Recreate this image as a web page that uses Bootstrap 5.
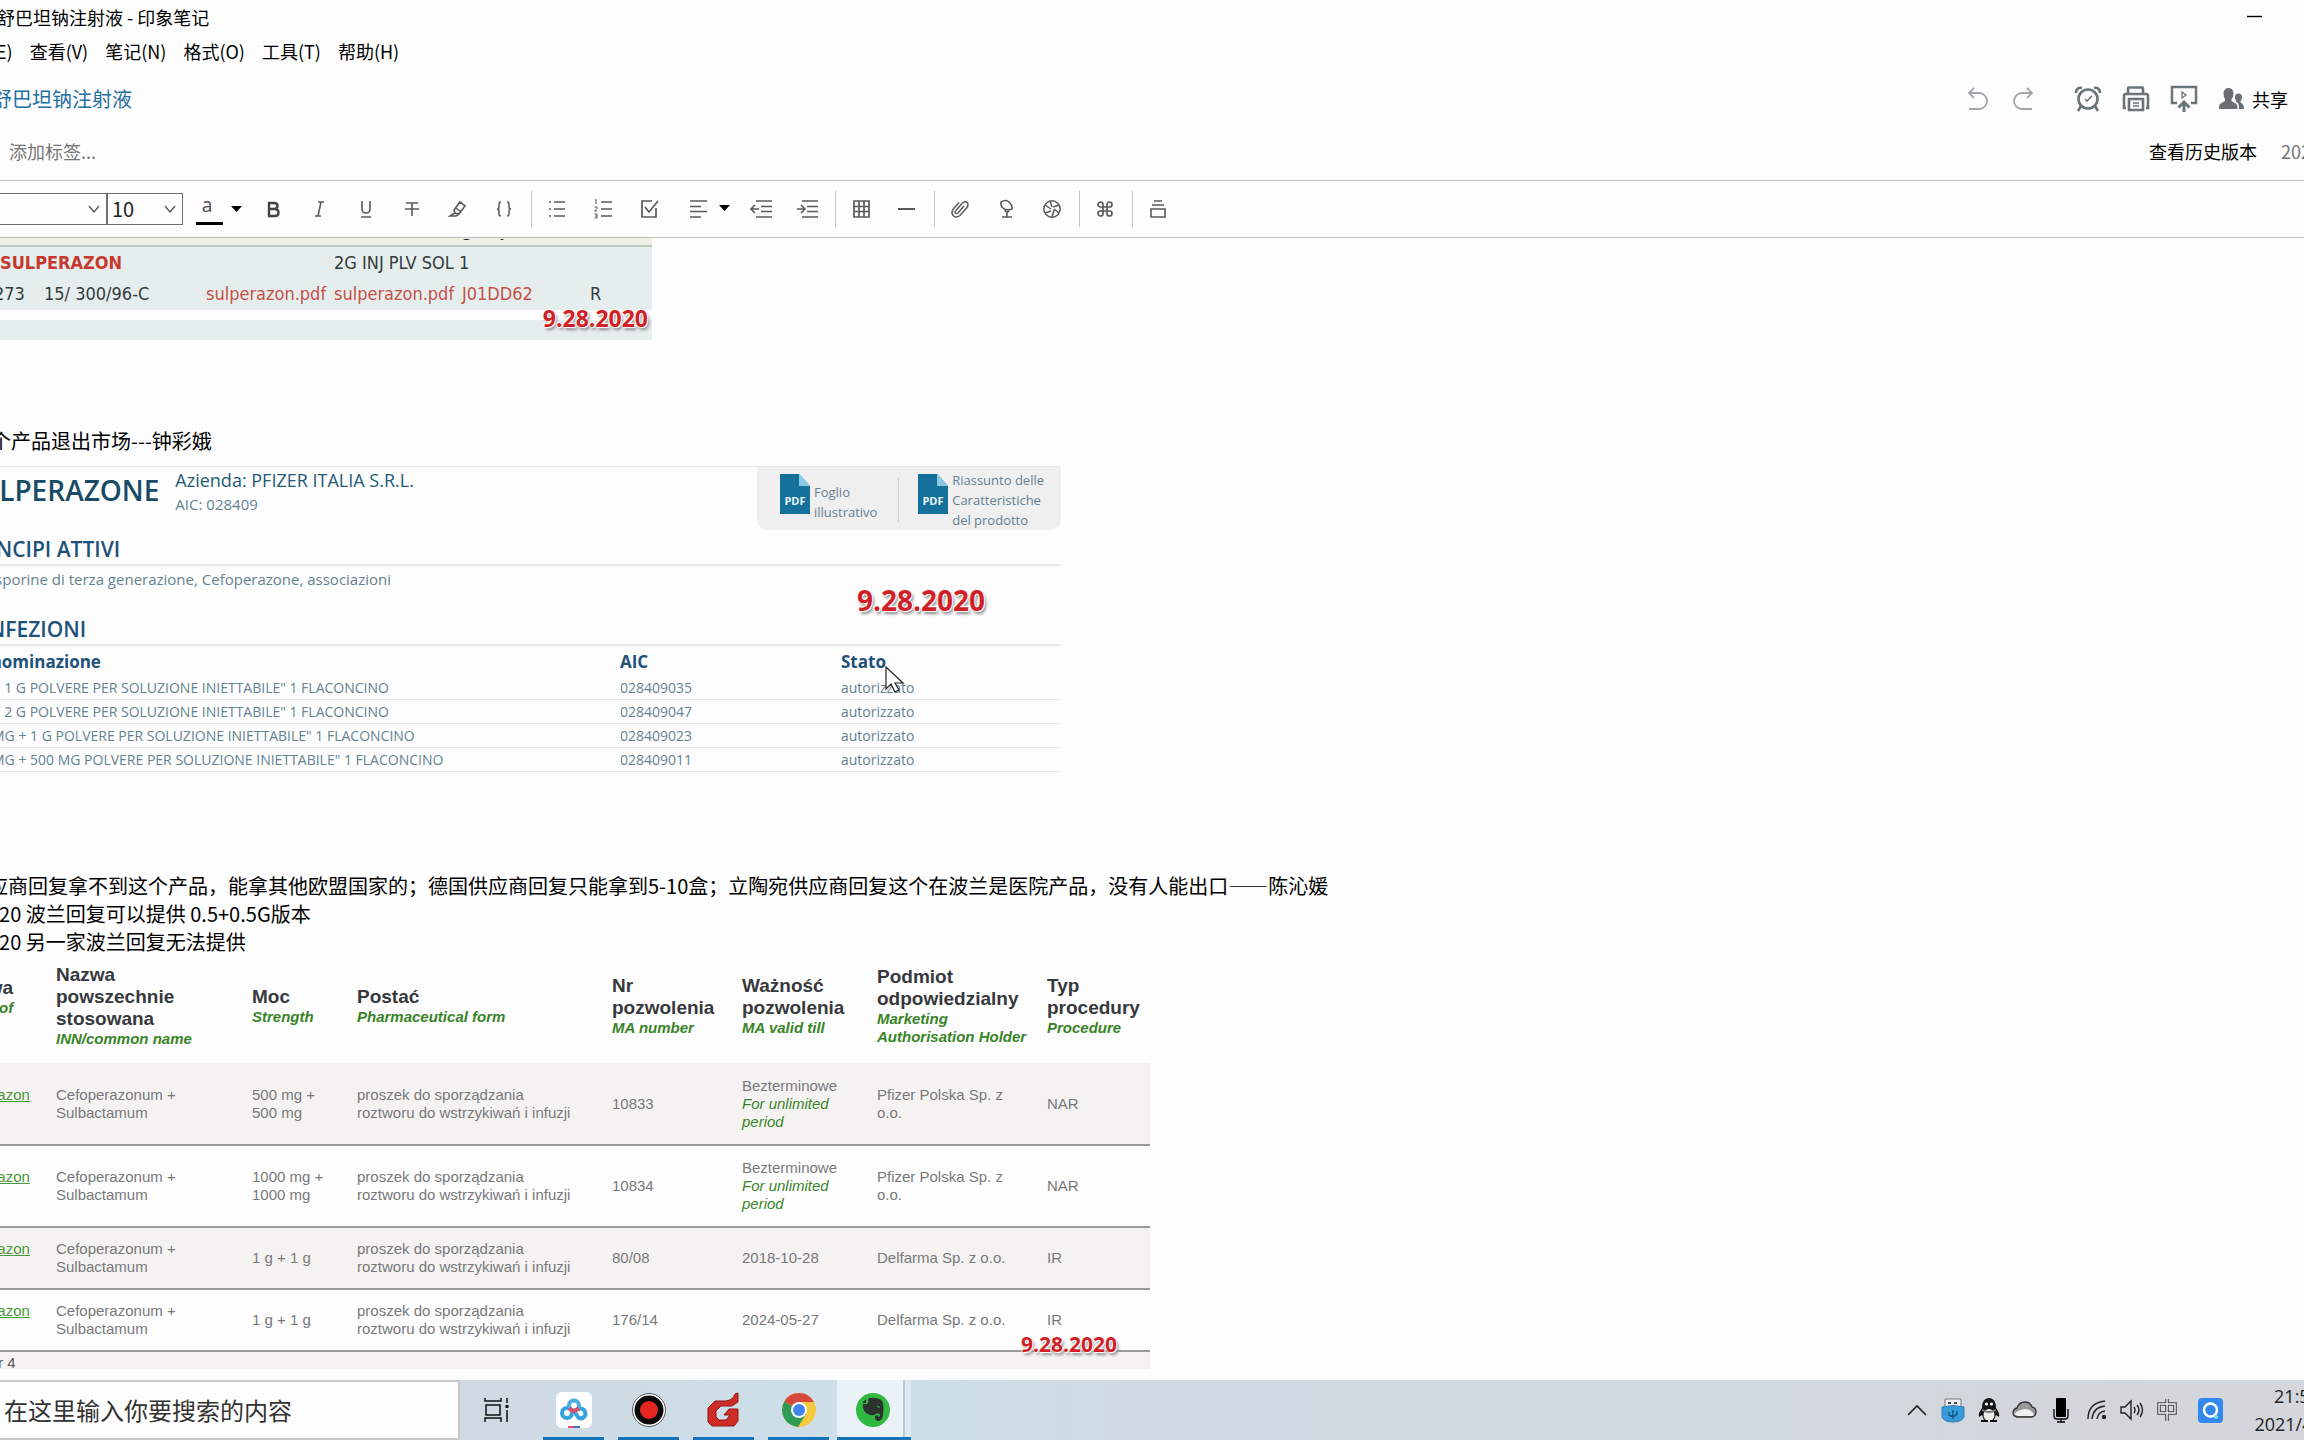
<!DOCTYPE html>
<html lang="zh-CN">
<head>
<meta charset="utf-8">
<meta name="viewport" content="width=device-width, initial-scale=1">
<title>印象笔记</title>
<link rel="stylesheet" href="https://cdn.jsdelivr.net/npm/bootstrap@5.3.0/dist/css/bootstrap.min.css">
<style>
body{background:#fdfdfd;color:#000;font-family:"Noto Sans CJK SC",sans-serif;font-size:18px;line-height:28px}
svg{display:block;flex:none}
a{text-decoration:none}
.ui-btn{background:none;border:0;padding:0;color:inherit;display:flex;align-items:center;justify-content:center}
.title-row{height:34px;padding-right:41px}
.menu-row{height:34px;gap:17px}
.note-row{height:62px;padding-right:16px}
.note-link{font-size:20px;color:#1f6f9f}
.tag-row{height:50px;padding:7px 0 0 9px}
.tag-input{border:0;background:none;padding:0;width:300px;color:#757575}
.tag-input::placeholder{color:#757575;opacity:1}
.dim{color:#757575}
.history{gap:24px;margin-right:-17px}
.note-tools{gap:14px;color:#6b7577}
.tools-left{gap:11px;color:#a2a7a9;margin-right:17px}
.tools-left .ui-btn,.note-tools>.ui-btn{width:34px}
.format-bar{height:58px;border-top:1px solid #bdbdbd;border-bottom:1px solid #bdbdbd;color:#5a5a5a}
.pick{appearance:none;height:32px;border:1px solid #6d6d6d;border-radius:0;padding:0 4px;font-size:20px;line-height:28px;color:#222;background:transparent}
.pick-wrap{position:relative}
.pick-wrap svg{position:absolute;right:7px;top:12px;pointer-events:none}
.pick-font{width:107px;border-left:0}
.pick-size{width:76px}
.fmt{width:46px;height:46px}
.fmt-color{width:42px;margin-left:6px}
.fmt-more{margin-right:8px}
.fmt-align{width:67px;gap:10px;padding-left:8px}
.bar-sep{width:1px;height:36px;background:#b5c6d4;margin:0 2px 0 4px}
.doc{min-height:0;overflow:hidden}
.para{font-size:20px}
.stamp{position:absolute;font-family:"Open Sans",sans-serif;font-weight:700;color:#d01f26;line-height:28px;text-shadow:0 0 2px #fff,1px 1px 1px #fff,-1px -1px 1px #fff,2px 3px 3px #888}
/* clip 1: registry table */
.clip-one{width:652px;font-family:"DejaVu Sans Condensed","DejaVu Sans",sans-serif;font-size:18px;color:#333a40}
.clip-one table{table-layout:fixed;width:100%}
.clip-one td,.clip-one th{padding:0;white-space:nowrap}
.clip-one thead th{height:8px;background:#edf0e6;border-bottom:2px solid #bccabd}
.peek{height:6px;overflow:hidden;display:flex;align-items:flex-end}
.peek span{line-height:20px;font-size:16px;color:#222;margin-bottom:3px}
.clip-one tbody td{height:32px;background:#e6eeed}
.clip-one .name{color:#c5392f;font-weight:700}
.clip-one a{color:#c5504a}
.clip-foot{height:20px;margin-top:10px;background:#e6eeed}
.s-one{font-size:23px;right:4px;bottom:8px}
/* clip 2: AIFA sheet */
.clip-two{width:1061px;border-top:1px solid #e6e9ea;font-family:"Open Sans",sans-serif;color:#66828f;font-size:14px;margin-top:11px}
.drug{font-size:28px;font-weight:600;color:#174b66;line-height:46px;margin-left:-37px}
.maker{font-size:18px;color:#235a75;line-height:26px}
.aic{font-size:15px;line-height:22px}
.leaflets{background:#efefef;border-radius:0 0 10px 10px;height:63px;width:304px;padding:7px 0 0 23px;font-size:13px;line-height:20px;margin-bottom:4px}
.leaflet{gap:4px;color:#66808f}
.leaflet-sep{width:1px;height:44px;background:#d3d3d3;margin:4px 19px 0 auto}
.sheet-h{font-size:21px;font-weight:600;color:#1d527a;line-height:30px;border-bottom:2px solid #e8ebec;margin:0}
.ingredients{font-size:15px;line-height:26px;margin-left:-49px}
.sheet{table-layout:fixed;width:100%}
.sheet th{font-size:17px;color:#1d527a;line-height:28px;padding:2px 0 0}
.sheet td{padding:0;line-height:23px;border-bottom:1px solid #e6e9ea;white-space:nowrap}
.s-two{font-size:28px;left:857px;top:119px}
.pointer{position:absolute;left:885px;top:199px}
/* clip 3: Polish register */
.clip-three{width:1196px;margin-left:-46px;font-family:"Liberation Sans",sans-serif;font-size:15px;line-height:18px;color:#77797b}
.reg{table-layout:fixed;width:100%}
.reg th{font-size:19px;line-height:22px;color:#37393d;padding:0 0 8px;height:107px;vertical-align:middle}
.reg th em{display:block;font-size:15px;line-height:18px;color:#3a8428}
.reg td{padding:0;border-bottom:2px solid #999;vertical-align:middle}
.reg td em{color:#3a8428}
.reg a{color:#48993a;text-decoration:underline}
.reg .odd td{background:#f5f3f2}
.tall td{height:82px}
.short td{height:62px}
.reg-foot{height:17px;background:#f5f3f2;padding-left:46px;color:#555;line-height:22px;overflow:hidden}
.s-three{font-size:21px;left:1067px;bottom:11px}
/* taskbar */
.taskbar{height:60px;background:linear-gradient(90deg,#cfd9e3 20%,#cddfe9 38%,#cedde7 43%,#d0d9e4 52%,#d3d6da 100%)}
.find{width:460px;border:2px solid #c9c9c9;border-left:0;border-radius:0;background:#fdfdfd;padding:0 0 0 4px;font-size:24px;color:#333}
.find::placeholder{color:#333;opacity:1}
.apps{gap:14px;margin-left:10px}
.app{width:61px;border-bottom:3px solid #1673b8;padding-top:3px}
.app-on{width:74px;margin-left:-6px;padding-right:2px;background:linear-gradient(90deg,#eaf1f7 66px,#b8c9d5 66px 68px,#dce8f0 68px)}
.app-task{width:73px}
.tray{gap:11px}
.tray .ui-btn{width:25px}
.clock{width:88px;margin:0 -37px 0 19px;text-align:center;font-family:"Open Sans",sans-serif;color:#222}
</style>
</head>
<body class="vh-100 overflow-hidden d-flex flex-column">
<svg width="0" height="0" class="position-absolute">
<defs>
<g id="pdf"><path d="M0 0h19l11 12v28H0z" fill="#15719c"/><path d="M19 0v12h11z" fill="#8cc9e2"/><text x="15" y="31" text-anchor="middle" font-family="Open Sans" font-size="11" font-weight="700" fill="#e8f5fb">PDF</text></g>
<path id="chev" d="M1 1l5 6 5-6" fill="none" stroke="#555" stroke-width="1.3"/>
</defs>
</svg>

<header>
<div class="title-row d-flex align-items-center justify-content-between">
<div class="text-nowrap" style="margin-left:-3px">舒巴坦钠注射液 - 印象笔记</div>
<button class="ui-btn" aria-label="最小化"><svg width="16" height="6"><path d="M0 2.5h15" stroke="#000" stroke-width="1.4"/></svg></button>
</div>
<nav class="menu-row d-flex align-items-center text-nowrap">
<a class="text-black" href="#" style="margin-left:-4px">E)</a><a class="text-black" href="#">查看(V)</a><a class="text-black" href="#">笔记(N)</a><a class="text-black" href="#">格式(O)</a><a class="text-black" href="#">工具(T)</a><a class="text-black" href="#">帮助(H)</a>
</nav>
<div class="note-row d-flex align-items-center justify-content-between">
<a class="note-link text-nowrap" href="#" style="margin-left:-8px">舒巴坦钠注射液</a>
<div class="note-tools d-flex align-items-center">
<div class="tools-left d-flex">
<button class="ui-btn" aria-label="撤销"><svg width="22" height="24" fill="none" stroke="currentColor" stroke-width="1.8"><path d="M7 1L2 6l5 5M2 6h10a8 8 0 0 1 0 16H2"/></svg></button>
<button class="ui-btn" aria-label="重做"><svg width="22" height="24" fill="none" stroke="currentColor" stroke-width="1.8"><path d="M15 1l5 5-5 5M20 6H10a8 8 0 0 0 0 16h10"/></svg></button>
</div>
<button class="ui-btn" aria-label="提醒"><svg width="28" height="26" fill="none" stroke="currentColor" stroke-width="2.6"><circle cx="14" cy="13" r="9.5"/><path d="M2 7c0-4 3-6 6-5M26 7c0-4-3-6-6-5M7 20l-3 5M21 20l3 5"/><path d="M11 13l2 2 5-5" stroke-width="1.6"/></svg></button>
<button class="ui-btn" aria-label="打印"><svg width="28" height="26" fill="none" stroke="currentColor" stroke-width="2.6"><path d="M6 7V2.500Q6 1.500 7 1.500h13q1 0 1 1V7M4 22H2V10q0-2 2-2h20q2 0 2 2v12h-2"/><path d="M7 13h14v11H7z"/><path d="M11 17h6M11 20h6" stroke-width="1.500"/></svg></button>
<button class="ui-btn" aria-label="演示"><svg width="28" height="28" fill="none" stroke="currentColor" stroke-width="2.500"><path d="M7 18H2V2h24v16h-5"/><path d="M14 27v-9M8.500 22.500L14 17l5.500 5.500" stroke-width="3"/><path d="M12 7v6l4-3z" stroke-width="1.300"/></svg></button>
<button class="ui-btn gap-2 w-auto text-nowrap ms-1"><svg width="25" height="22" fill="#6b6f71"><path d="M4.500 5a5 5 0 0 1 10 0q0 4-2 6v2l5 3q1 1 1 5H0q0-4 1-5l5-3v-2Q4.500 9 4.500 5z"/><path d="M16 9a3.500 3.500 0 0 1 7 0q0 3-1.500 4v1.500q3.500 1.500 3.500 6.500h-5q0-4-1-6l-2-1v-1.500q-1-1-1-3.500z"/></svg><span class="text-black">共享</span></button>
</div>
</div>
<div class="tag-row d-flex align-items-start justify-content-between">
<input class="tag-input" aria-label="添加标签" placeholder="添加标签...">
<div class="history d-flex text-nowrap"><a class="text-black" href="#">查看历史版本</a><span class="dim">2021</span></div>
</div>
</header>

<div class="format-bar d-flex align-items-center">
<div class="pick-wrap"><select class="pick pick-font" aria-label="字体"><option></option></select><svg width="12" height="8"><use href="#chev"/></svg></div>
<div class="pick-wrap"><select class="pick pick-size" aria-label="字号"><option>10</option></select><svg width="12" height="8"><use href="#chev"/></svg></div>
<button class="ui-btn fmt-color" aria-label="文字颜色"><svg width="28" height="34"><text x="11" y="20" text-anchor="middle" font-family="Noto Sans" font-size="19" fill="#555">a</text><path d="M0 30h27v3H0z"/></svg></button>
<button class="ui-btn fmt-more" aria-label="更多颜色"><svg width="12" height="7"><path d="M0 0h11L5.500 6z"/></svg></button>
<button class="ui-btn fmt" aria-label="粗体"><svg width="20" height="20" fill="none" stroke="#444" stroke-width="2.400"><path d="M5 4h5q3.500 0 3.500 3T10 10H5zM5 10h6q3.500 0 3.500 3.500T11 17H5z"/></svg></button>
<button class="ui-btn fmt" aria-label="斜体"><svg width="20" height="20" fill="none" stroke="currentColor" stroke-width="1.600"><path d="M8 3h6M5 17h6M11 3L8 17"/></svg></button>
<button class="ui-btn fmt" aria-label="下划线"><svg width="20" height="20" fill="none" stroke="currentColor" stroke-width="1.600"><path d="M6 2v8q0 4 4 4t4-4V2M5 18h10"/></svg></button>
<button class="ui-btn fmt" aria-label="删除线"><svg width="20" height="20" fill="none" stroke="currentColor" stroke-width="1.600"><path d="M4 4h12M3 10h14M10 4v13"/></svg></button>
<button class="ui-btn fmt" aria-label="高亮"><svg width="20" height="20" fill="none" stroke="currentColor" stroke-width="1.600"><path d="M6 11l6-8 5 4-6 8-4-1zM6 11l1 3-5 3h6l3-2M8 9l5 4"/></svg></button>
<button class="ui-btn fmt" aria-label="代码"><svg width="20" height="20" fill="none" stroke="currentColor" stroke-width="1.500"><path d="M7 3Q5 3 5 5v3q0 2-2 2 2 0 2 2v3q0 2 2 2M13 3q2 0 2 2v3q0 2 2 2-2 0-2 2v3q0 2-2 2"/></svg></button>
<div class="bar-sep"></div>
<button class="ui-btn fmt" aria-label="项目列表"><svg width="20" height="20" fill="none" stroke="currentColor" stroke-width="1.600"><path d="M7 3h11M7 10h11M7 17h11M2 3h2M2 10h2M2 17h2"/></svg></button>
<button class="ui-btn fmt" aria-label="编号列表"><svg width="20" height="20" fill="none" stroke="currentColor" stroke-width="1.600"><path d="M8 3h11M8 10h11M8 17h11"/><path d="M2 1l1-.500V5M1.500 8H4v1.500L1.500 12H4M1.500 15H4v4H1.500M2 17h2" stroke-width="1"/></svg></button>
<button class="ui-btn fmt" aria-label="待办"><svg width="20" height="20" fill="none" stroke="currentColor" stroke-width="1.700"><path d="M13 2H3v16h14v-9M6 8l4 5 9-11"/></svg></button>
<button class="ui-btn fmt-align" aria-label="对齐"><svg width="20" height="20" fill="none" stroke="currentColor" stroke-width="1.700"><path d="M1 2h17M1 7.500h11M1 12.500h17M1 18h11"/></svg><svg width="12" height="12"><path d="M0 2h11L5.500 8z" fill="#000"/></svg></button>
<button class="ui-btn fmt" aria-label="减少缩进"><svg width="24" height="20" fill="none" stroke="currentColor" stroke-width="1.600"><path d="M6 2h16M11 7.500h11M11 12.500h11M6 18h16M9 10H2M5 6l-4 4 4 4"/></svg></button>
<button class="ui-btn fmt" aria-label="增加缩进"><svg width="24" height="20" fill="none" stroke="currentColor" stroke-width="1.600"><path d="M6 2h16M11 7.500h11M11 12.500h11M6 18h16M1 10h8M5 6l4 4-4 4"/></svg></button>
<div class="bar-sep"></div>
<button class="ui-btn fmt" aria-label="表格"><svg width="20" height="20" fill="none" stroke="currentColor" stroke-width="1.700"><path d="M3 2h15v16H3zM3 7.500h15M3 12.500h15M8 2v16M13 2v16"/></svg></button>
<button class="ui-btn fmt" aria-label="分割线"><svg width="20" height="20" fill="none" stroke="currentColor" stroke-width="2"><path d="M1 10h17"/></svg></button>
<div class="bar-sep"></div>
<button class="ui-btn fmt" aria-label="附件"><svg width="20" height="20" fill="none" stroke="currentColor" stroke-width="1.500"><path d="M14 7l-6 7q-2 1.500-3-.500 0-1 1-2l6-7q3-3 5-1t0 5l-7 8q-4 3-7 0-2-3 0-6l6-7"/></svg></button>
<button class="ui-btn fmt" aria-label="录音"><svg width="20" height="20" fill="none" stroke="currentColor" stroke-width="1.600"><path d="M5 3q5-3 8 0 4 4 3 7l-4 1Q4 10 5 3zM9 10q0 3 2 3t2-3M11 13v5M6 18h10"/></svg></button>
<button class="ui-btn fmt" aria-label="拍照"><svg width="20" height="20" fill="none" stroke="currentColor" stroke-width="1.500"><circle cx="10" cy="10" r="8.200"/><path d="M8 2l2 6M17 6l-6 2M17 14l-5-4M10 18l2-7M3 14l6-2M3 6l6 4"/></svg></button>
<div class="bar-sep"></div>
<button class="ui-btn fmt" aria-label="快捷键"><svg width="20" height="20" fill="none" stroke="currentColor" stroke-width="1.700"><path d="M8 8H5.500a2.500 2.500 0 1 1 2.500-2.500v9A2.500 2.500 0 1 1 5.500 12h9a2.500 2.500 0 1 1-2.500 2.500v-9A2.500 2.500 0 1 1 14.500 8z"/></svg></button>
<div class="bar-sep"></div>
<button class="ui-btn fmt" aria-label="模板"><svg width="20" height="20" fill="none" stroke="currentColor" stroke-width="1.600"><path d="M6 2h8M4 6h12M3 10h14v8H3z"/></svg></button>
</div>

<main class="doc flex-grow-1">
<section class="clip-one position-relative">
<table>
<colgroup><col style="width:44px"><col style="width:162px"><col style="width:128px"><col style="width:128px"><col style="width:128px"><col></colgroup>
<thead><tr><th colspan="4"></th><th colspan="2"><div class="peek"><span>group</span></div></th></tr></thead>
<tbody>
<tr><td colspan="3" class="name">SULPERAZON</td><td colspan="3">2G INJ PLV SOL 1</td></tr>
<tr><td><span style="margin-left:-6px">273</span></td><td>15/ 300/96-C</td><td><a href="#">sulperazon.pdf</a></td><td><a href="#">sulperazon.pdf</a></td><td><a href="#">J01DD62</a></td><td>R</td></tr>
</tbody>
</table>
<div class="clip-foot"></div>
<div class="stamp s-one">9.28.2020</div>
</section>

<p class="para mb-0 text-nowrap" style="margin:87px 0 0 -9px">个产品退出市场---钟彩娥</p>

<section class="clip-two position-relative">
<div class="d-flex">
<div class="drug">SULPERAZONE</div>
<div class="ms-3"><div class="maker">Azienda: PFIZER ITALIA S.R.L.</div><div class="aic">AIC: 028409</div></div>
<div class="leaflets d-flex ms-auto">
<a class="leaflet d-flex" href="#"><svg width="30" height="40"><use href="#pdf"/></svg><span class="pt-2">Foglio<br>illustrativo</span></a>
<div class="leaflet-sep"></div>
<a class="leaflet d-flex" href="#" style="margin-right:17px"><svg width="30" height="40"><use href="#pdf"/></svg><span style="margin-top:-4px">Riassunto delle<br>Caratteristiche<br>del prodotto</span></a>
</div>
</div>
<h2 class="sheet-h text-nowrap"><span style="margin-left:-37px">PRINCIPI ATTIVI</span></h2>
<div class="ingredients text-nowrap">Cefalosporine di terza generazione, Cefoperazone, associazioni</div>
<h2 class="sheet-h text-nowrap" style="padding-top:22px"><span style="margin-left:-41px">CONFEZIONI</span></h2>
<table class="sheet">
<colgroup><col style="width:620px"><col style="width:221px"><col></colgroup>
<thead><tr><th><span style="margin-left:-32px">Denominazione</span></th><th>AIC</th><th>Stato</th></tr></thead>
<tbody>
<tr><td><span style="margin-left:-5px">" 1 G POLVERE PER SOLUZIONE INIETTABILE" 1 FLACONCINO</span></td><td>028409035</td><td>autorizzato</td></tr>
<tr><td><span style="margin-left:-5px">" 2 G POLVERE PER SOLUZIONE INIETTABILE" 1 FLACONCINO</span></td><td>028409047</td><td>autorizzato</td></tr>
<tr><td><span style="margin-left:-8px">MG + 1 G POLVERE PER SOLUZIONE INIETTABILE" 1 FLACONCINO</span></td><td>028409023</td><td>autorizzato</td></tr>
<tr><td><span style="margin-left:-8px">MG + 500 MG POLVERE PER SOLUZIONE INIETTABILE" 1 FLACONCINO</span></td><td>028409011</td><td>autorizzato</td></tr>
</tbody>
</table>
<div class="stamp s-two">9.28.2020</div>
<svg class="pointer" width="20" height="28"><path d="M1 1v22l5-5 4 8 4-2-4-7h8z" fill="#fff" stroke="#222" stroke-width="1.200"/></svg>
</section>

<div class="para text-nowrap" style="margin:100px 0 0 -12px">
<div>应商回复拿不到这个产品，能拿其他欧盟国家的；德国供应商回复只能拿到5-10盒；立陶宛供应商回复这个在波兰是医院产品，没有人能出口——陈沁媛</div>
<div>020 波兰回复可以提供 0.5+0.5G版本</div>
<div>020 另一家波兰回复无法提供</div>
</div>

<section class="clip-three position-relative">
<table class="reg">
<colgroup><col style="width:102px"><col style="width:196px"><col style="width:105px"><col style="width:255px"><col style="width:130px"><col style="width:135px"><col style="width:170px"><col></colgroup>
<thead><tr>
<th>Nazwa<em>Name of<br>&nbsp;</em></th><th>Nazwa<br>powszechnie<br>stosowana<em>INN/common name</em></th><th>Moc<em>Strength</em></th><th>Postać<em>Pharmaceutical form</em></th><th>Nr<br>pozwolenia<em>MA number</em></th><th>Ważność<br>pozwolenia<em>MA valid till</em></th><th>Podmiot<br>odpowiedzialny<em>Marketing<br>Authorisation Holder</em></th><th>Typ<br>procedury<em>Procedure</em></th>
</tr></thead>
<tbody>
<tr class="tall odd"><td><a href="#">Sulperazon</a><br>&nbsp;</td><td>Cefoperazonum +<br>Sulbactamum</td><td>500 mg +<br>500 mg</td><td>proszek do sporządzania<br>roztworu do wstrzykiwań i infuzji</td><td>10833</td><td>Bezterminowe<br><em>For unlimited<br>period</em></td><td>Pfizer Polska Sp. z<br>o.o.</td><td>NAR</td></tr>
<tr class="tall"><td><a href="#">Sulperazon</a><br>&nbsp;</td><td>Cefoperazonum +<br>Sulbactamum</td><td>1000 mg +<br>1000 mg</td><td>proszek do sporządzania<br>roztworu do wstrzykiwań i infuzji</td><td>10834</td><td>Bezterminowe<br><em>For unlimited<br>period</em></td><td>Pfizer Polska Sp. z<br>o.o.</td><td>NAR</td></tr>
<tr class="short odd"><td><a href="#">Sulperazon</a><br>&nbsp;</td><td>Cefoperazonum +<br>Sulbactamum</td><td>1 g + 1 g</td><td>proszek do sporządzania<br>roztworu do wstrzykiwań i infuzji</td><td>80/08</td><td>2018-10-28</td><td>Delfarma Sp. z o.o.</td><td>IR</td></tr>
<tr class="short"><td><a href="#">Sulperazon</a><br>&nbsp;</td><td>Cefoperazonum +<br>Sulbactamum</td><td>1 g + 1 g</td><td>proszek do sporządzania<br>roztworu do wstrzykiwań i infuzji</td><td>176/14</td><td>2024-05-27</td><td>Delfarma Sp. z o.o.</td><td>IR</td></tr>
</tbody>
</table>
<div class="reg-foot"><span style="margin-left:-2px">r 4</span></div>
<div class="stamp s-three">9.28.2020</div>
</section>
</main>

<footer class="taskbar d-flex">
<input class="find" type="search" aria-label="搜索" placeholder="在这里输入你要搜索的内容">
<button class="ui-btn app-task" aria-label="任务视图"><svg width="26" height="26" fill="none" stroke="#111" stroke-width="1.500"><path d="M1 1v3h16V1M1 25v-4h16v4M2 8h14v10H2zM23 1v5M23 13v12"/><path d="M21.500 8h3v3h-3z" fill="#111" stroke="none"/></svg></button>
<div class="apps d-flex">
<button class="ui-btn app" aria-label="百度网盘"><svg width="36" height="36"><rect width="36" height="36" rx="6" fill="#fff"/><g fill="none" stroke-width="4"><circle cx="11" cy="21" r="5" stroke="#36a3e0"/><path d="M22 18q3-3 6 0 3 4 0 7t-6 0l-4-6" stroke="#36a3e0"/><circle cx="18" cy="13.500" r="5" stroke="#49aee0"/><path d="M13.500 16q4 6 9 0" stroke="#e0506a"/></g><path d="M12 34h6v2h-6z" fill="#e0506a"/><path d="M18 34h6v2h-6z" fill="#3478c0"/></svg></button>
<button class="ui-btn app" aria-label="录屏"><svg width="36" height="36"><circle cx="18" cy="18" r="16.500" fill="#fff" stroke="#555"/><circle cx="18" cy="18" r="14.500" fill="#080808"/><circle cx="18" cy="18" r="9" fill="#e52620"/></svg></button>
<button class="ui-btn app" aria-label="福昕"><svg width="36" height="36"><path d="M32 1v9l-6 4H15l-5 5v6l3 3h7l4-5h-6l5-6h9v12l-4 5H6l-4-4V16l7-7h11q7-1 9-7z" fill="#cf2b27" stroke="#8f1b18"/></svg></button>
<button class="ui-btn app" aria-label="Chrome"><svg width="36" height="36"><circle cx="18" cy="18" r="17" fill="#f5c93d"/><path d="M18 18L3.300 9.500A17 17 0 0 0 17 35l8-13z" fill="#2f9b55"/><path d="M18 18L3.300 9.500A17 17 0 0 1 33 10H18z" fill="#d64a3d"/><circle cx="18" cy="18" r="8" fill="#fff"/><circle cx="18" cy="18" r="6" fill="#4384ee"/></svg></button>
<button class="ui-btn app app-on" aria-label="印象笔记"><svg width="36" height="36"><circle cx="18" cy="18" r="17" fill="#2fb93f"/><path d="M13 7q2-2 8-1 6 1 7 5 1 6 0 12-1 6-5 6-4-1-3-5l3-1v2q2 0 2-2-1-3-4-1-4 3-10-1-4-4-3-9h4q2-1 1-6z" fill="#2b3230"/><path d="M11 7v4H7z" fill="#2b3230"/><path d="M22 14q3 0 3 2-2-1-3-1z" fill="#2fb93f"/></svg></button>
</div>
<div class="tray d-flex align-items-center ms-auto">
<button class="ui-btn" aria-label="显示隐藏的图标"><svg width="20" height="12" fill="none" stroke="#222" stroke-width="1.600"><path d="M1 11l9-9 9 9"/></svg></button>
<button class="ui-btn" aria-label="USB"><svg width="24" height="26"><path d="M4 2h16v8H4z" fill="#eee" stroke="#777"/><path d="M7 5h3v2H7zM13 5h3v2h-3z" fill="#444"/><path d="M1 10q11-3 22 0v10q-2 5-11 5T1 20z" fill="#3a9bd9" stroke="#2c7cb4"/><path d="M12 22v-9M8 15v3l4 2 4-3v-3" fill="none" stroke="#14578a" stroke-width="1.500"/></svg></button>
<button class="ui-btn" aria-label="QQ"><svg width="22" height="26"><path d="M4 11Q4 1 11 1t7 10q4 5 3 9l-3-2-2 5H6l-2-5-3 2q-1-4 3-9z" fill="#151515"/><ellipse cx="11" cy="18" rx="5.500" ry="6" fill="#eee"/><circle cx="8.500" cy="7" r="1.600" fill="#fff"/><circle cx="13.500" cy="7" r="1.600" fill="#fff"/><path d="M4 12q7 4 14 0v2q-7 4-14 0z" fill="#777"/><path d="M3 24h7M12 24h7" stroke="#111" stroke-width="2"/></svg></button>
<button class="ui-btn" aria-label="云"><svg width="25" height="18"><path d="M5 16q-4-1-4-4 0-4 4-5 2-6 8-6 5 0 7 5 4 1 4 5 0 4-4 5z" fill="#999" stroke="#333" stroke-width="1.300"/><path d="M2 13q6-5 12-5 6 1 8 6l-2 1H6z" fill="#f0f0f0"/></svg></button>
<button class="ui-btn" aria-label="麦克风"><svg width="16" height="26"><rect x="3" y="1" width="10" height="19" rx="1"/><path d="M1 12v7q0 3 3 3h8q3 0 3-3v-7M8 22v3M4 25h8" fill="none" stroke="#000" stroke-width="1.300"/></svg></button>
<button class="ui-btn" aria-label="网络"><svg width="22" height="22" fill="none" stroke="#222" stroke-width="1.400"><path d="M2 20Q2 4 19 2M6 20Q7 8 19 7M11 20q1-7 8-8"/><circle cx="18" cy="18" r="1.500" fill="#222"/></svg></button>
<button class="ui-btn" aria-label="音量"><svg width="25" height="22" fill="none" stroke="#222" stroke-width="1.400"><path d="M1 8h4l6-6v18l-6-6H1zM14 8q2 3 0 6M17 6q4 5 0 10M20 4q5 7 0 14"/></svg></button>
<button class="ui-btn" aria-label="输入法：中文" style="margin-left:-2px"><svg width="20" height="24" fill="none"><path d="M2 6h16v9H2zM10 1v22" stroke="#444" stroke-width="3.600"/><path d="M2 6h16v9H2zM10 1v22" stroke="#f4f4f4" stroke-width="1.400"/></svg></button>
<button class="ui-btn ms-2" aria-label="Q"><svg width="25" height="25"><rect width="25" height="25" rx="4" fill="#3388f0"/><circle cx="12.500" cy="12" r="6.500" fill="none" stroke="#fff" stroke-width="2.500"/><circle cx="18" cy="19" r="2" fill="#7fe0f5"/></svg></button>
<div class="clock">21:50<br>2021/4/29</div>
</div>
</footer>
<script src="https://cdn.jsdelivr.net/npm/bootstrap@5.3.0/dist/js/bootstrap.bundle.min.js"></script>
</body>
</html>
